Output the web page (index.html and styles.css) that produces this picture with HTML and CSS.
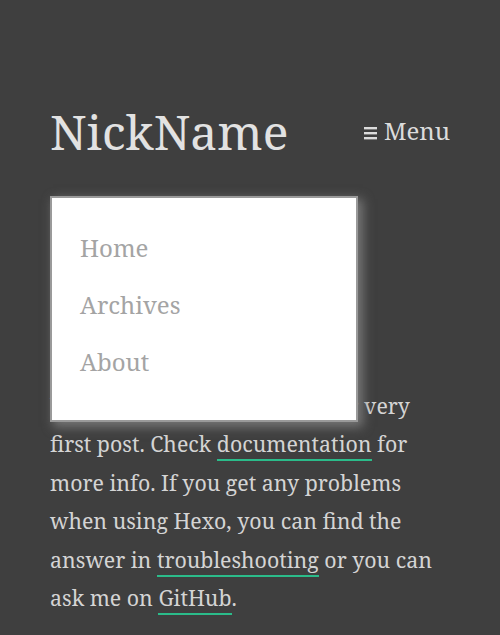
FILE: index.html
```html
<!DOCTYPE html>
<html lang="en">
<head>
    <meta charset="UTF-8">
    <meta name="viewport" content="width=device-width, initial-scale=1.0">
    <title>NickName</title>
    <link rel="stylesheet" href="styles.css">
</head>
<body>
    <div class="page">
        <header class="header">
            <a href="#" class="logo">NickName</a>
            <a href="#" class="menu-toggle">
                <svg class="menu-icon" width="13" height="14" viewBox="0 0 13 14">
                    <rect x="0" y="1" width="13" height="2.4" fill="#dcdcdc"/>
                    <rect x="0" y="6" width="13" height="2.4" fill="#dcdcdc"/>
                    <rect x="0" y="11" width="13" height="2.4" fill="#dcdcdc"/>
                </svg>
                Menu
            </a>
            <nav class="dropdown">
                <ul>
                    <li><a href="#">Home</a></li>
                    <li><a href="#">Archives</a></li>
                    <li><a href="#">About</a></li>
                </ul>
            </nav>
        </header>

        <article class="post">
            <p>Welcome to <a href="#">Hexo</a>! This is your very first post. Check <a href="#" class="link">documentation</a> for more info. If you get any problems when using Hexo, you can find the answer in <a href="#" class="link">troubleshooting</a> or you can ask me on <a href="#" class="link">GitHub</a>.</p>
        </article>
    </div>
</body>
</html>
```

FILE: styles.css
```css
body {
    margin: 0;
    background: #3f3f3f;
    color: #d4d4d4;
    font-family: "Noto Serif", "Droid Serif", "DejaVu Serif", serif;
}
.page {
    padding: 0 50px;
}
a {
    color: inherit;
    text-decoration: none;
}
.header {
    position: relative;
    display: flex;
    justify-content: space-between;
    align-items: center;
    padding-top: 103px;
}
.logo {
    font-size: 48px;
    line-height: 58px;
    color: #e2e2e2;
}
.menu-toggle {
    display: flex;
    align-items: center;
    gap: 7px;
    font-size: 24px;
    line-height: 30px;
    color: #dcdcdc;
    margin-top: -2px;
}
.menu-icon {
    margin-top: 3px;
}
/* menu abierto, encima del articulo */
.dropdown {
    position: absolute;
    z-index: 2;
    left: 0;
    top: 196px;
    width: 304px;
    height: 222px;
    background: #fff;
    border: 2px solid #9a9a9a;
    box-shadow: 4px 4px 10px 1px #767676;
}
.dropdown ul {
    list-style: none;
    margin: 0;
    padding: 21px 0 0 28px;
}
.dropdown li {
    font-size: 24px;
    line-height: 57px;
}
.dropdown a {
    color: #a4a4a4;
}
.post {
    padding-top: 226px;
}
.post p {
    font-size: 21.33px;
    line-height: 38.4px;
    margin: 0;
}
.link {
    border-bottom: 2px solid #2bbc8a;
    padding-bottom: 1px;
}
```
